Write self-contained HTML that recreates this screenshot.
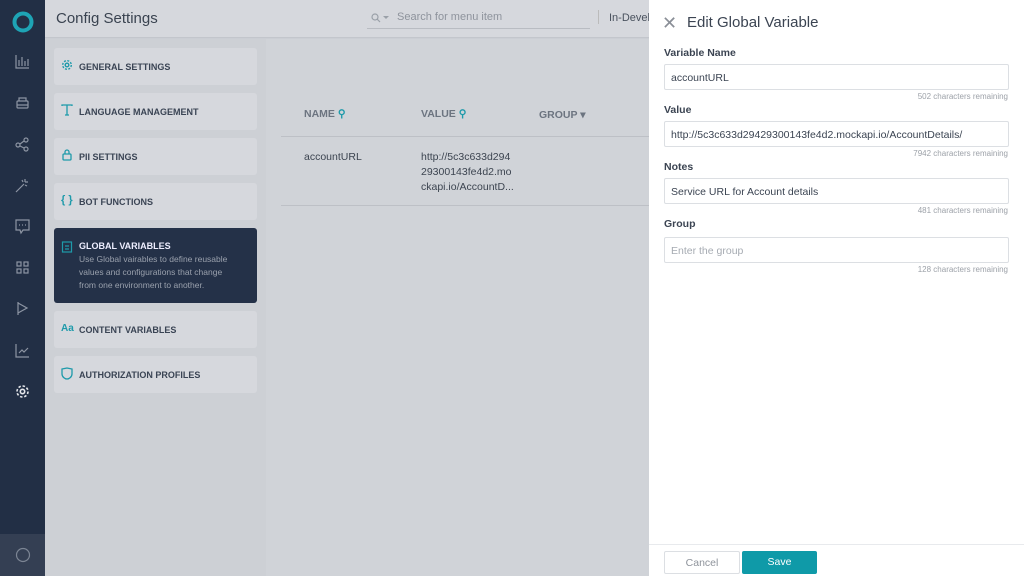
<!DOCTYPE html>
<html><head><meta charset="utf-8"><style>
*{box-sizing:border-box;margin:0;padding:0}
body{width:1024px;height:576px;overflow:hidden;position:relative;font-family:"Liberation Sans",sans-serif;background:#cbced4}
.side{position:absolute;left:0;top:0;width:45px;height:576px;background:#222f45}
.side .bot{position:absolute;left:0;bottom:0;width:45px;height:42px;background:#343f53}
.ic{position:absolute;left:14px;width:17px;height:17px}
.hdr{position:absolute;left:45px;top:0;width:604px;height:38px;background:#d6d8dd;border-bottom:1px solid #c3c6cc;overflow:hidden}
.hdr .t{position:absolute;left:11px;top:10px;font-size:15px;color:#3a4350}
.search{position:absolute;left:322px;top:8px;width:223px;height:21px;border-bottom:1px solid #b9bcc2;font-size:11px;color:#8e939c;padding:3px 0 0 30px}
.mid{position:absolute;left:45px;top:39px;width:221px;height:537px;background:#cdd0d5}
.card{position:absolute;left:9px;width:203px;height:37px;background:#d6d8dd;border-radius:3px;font-size:9px;font-weight:bold;color:#3a4454;padding:14px 0 0 25px}
.card svg{position:absolute;left:7px;top:11px}
.card.act{background:#243148;color:#eef;height:75px;padding-top:13px}
.card.act p{font-weight:normal;color:#9aa1ad;font-size:8.5px;line-height:13px;margin-top:2px;width:160px}
.tbl{position:absolute;left:266px;top:39px;width:383px;height:537px;background:#d0d3d8}
.th{position:absolute;top:69px;font-size:10.5px;font-weight:bold;color:#6c7480}
.line{position:absolute;left:15px;width:368px;height:1px;background:#bdc0c6}
.td{position:absolute;font-size:10.5px;color:#3c4450;line-height:15px}
.panel{position:absolute;left:649px;top:0;width:375px;height:576px;background:#fff}
.panel .x{position:absolute;left:13px;top:13px;font-size:18px;color:#8a8f97}
.panel h1{position:absolute;left:38px;top:14px;font-size:15px;font-weight:normal;color:#3b4452}
.lbl{position:absolute;left:15px;font-size:10.5px;font-weight:bold;color:#3b4452}
.inp{position:absolute;left:15px;width:345px;height:26px;border:1px solid #dcdfe3;border-radius:2px;font-size:10.5px;color:#3b4452;padding:7px 0 0 6px}
.rem{position:absolute;right:16px;font-size:8px;color:#9ca1a8}
.foot{position:absolute;left:0;top:544px;width:375px;height:32px;border-top:1px solid #e8eaed}
.btn{position:absolute;top:6px;height:23px;font-size:10.5px;text-align:center;padding-top:5px;border-radius:2px}
</style></head><body>
<div class="side">
<svg style="position:absolute;left:12px;top:11px" width="22" height="22"><circle cx="11" cy="11" r="8.5" fill="none" stroke="#1ea4b5" stroke-width="4"/></svg>
<svg class="ic" style="top:53px" viewBox="0 0 17 17" fill="none" stroke="#8d95a3" stroke-width="1.2"><path d="M2 2v13h13M5 13V7M8 13V4M11 13V8M14 13V6"/></svg>
<svg class="ic" style="top:94px" viewBox="0 0 17 17" fill="none" stroke="#8d95a3" stroke-width="1.2"><rect x="3" y="7" width="11" height="7" rx="1"/><path d="M5 7V4h7v3M3 11h11"/></svg>
<svg class="ic" style="top:136px" viewBox="0 0 17 17" fill="none" stroke="#8d95a3" stroke-width="1.2"><circle cx="4" cy="9" r="2"/><circle cx="12" cy="4" r="2"/><circle cx="12" cy="13" r="2"/><path d="M6 8l4-3M6 10l4 2"/></svg>
<svg class="ic" style="top:177px" viewBox="0 0 17 17" fill="none" stroke="#8d95a3" stroke-width="1.2"><path d="M2 15l8-8M11 2v3M14 5h-3M13 9l-2-1M8 3l1 2"/></svg>
<svg class="ic" style="top:218px" viewBox="0 0 17 17" fill="none" stroke="#8d95a3" stroke-width="1.2"><path d="M2 2h13v10H9l-2 3-1-3H2z"/><path d="M5 7h1M8 7h1M11 7h1"/></svg>
<svg class="ic" style="top:259px" viewBox="0 0 17 17" fill="none" stroke="#8d95a3" stroke-width="1.2"><rect x="3" y="3" width="4" height="4"/><rect x="10" y="3" width="4" height="4"/><rect x="3" y="10" width="4" height="4"/><rect x="10" y="10" width="4" height="4"/></svg>
<svg class="ic" style="top:300px" viewBox="0 0 17 17" fill="none" stroke="#8d95a3" stroke-width="1.2"><path d="M4 2v13M4 3l9 5-9 5"/></svg>
<svg class="ic" style="top:342px" viewBox="0 0 17 17" fill="none" stroke="#8d95a3" stroke-width="1.2"><path d="M2 2v13h13M5 11l3-3 2 2 4-4"/></svg>
<svg class="ic" style="top:383px" viewBox="0 0 17 17" fill="none" stroke="#e6e8ec" stroke-width="1.6"><circle cx="8.5" cy="8.5" r="2.2"/><circle cx="8.5" cy="8.5" r="5.5" stroke-dasharray="2.5 1.8"/></svg>
<div class="bot"><svg style="position:absolute;left:15px;top:13px" width="16" height="16"><circle cx="8" cy="8" r="6.5" fill="none" stroke="#7c8594" stroke-width="1.2"/></svg></div>
</div>
<div class="hdr"><div class="t">Config Settings</div>
<div class="search"><svg style="position:absolute;left:4px;top:5px" width="20" height="10" viewBox="0 0 20 10" fill="none" stroke="#9aa0a8" stroke-width="1.2"><circle cx="4" cy="4" r="3"/><path d="M6.2 6.2L9 9"/><path d="M12 3h6l-3 3z" fill="#9aa0a8" stroke="none"/></svg>Search for menu item</div>
<div style="position:absolute;left:553px;top:10px;width:1px;height:14px;background:#bbb"></div>
<div style="position:absolute;left:564px;top:12px;font-size:11px;color:#4a525e;white-space:nowrap">In-Devel</div>
</div>
<div class="mid">
<div class="card" style="top:9px"><svg width="12" height="12" viewBox="0 0 12 12" fill="none" stroke="#1e9aaa" stroke-width="1.4"><circle cx="6" cy="6" r="1.8"/><circle cx="6" cy="6" r="4.3" stroke-dasharray="2 1.4"/></svg>GENERAL SETTINGS</div>
<div class="card" style="top:54px"><svg width="12" height="12" viewBox="0 0 12 12" fill="none" stroke="#1e9aaa" stroke-width="1.3"><path d="M1 2V1h10v1M6 1v10M4 11h4"/></svg>LANGUAGE MANAGEMENT</div>
<div class="card" style="top:99px"><svg width="12" height="12" viewBox="0 0 12 12" fill="none" stroke="#1e9aaa" stroke-width="1.3"><rect x="2" y="5" width="8" height="6" rx="1"/><path d="M4 5V3a2 2 0 0 1 4 0v2"/></svg>PII SETTINGS</div>
<div class="card" style="top:144px"><span style="position:absolute;left:7px;top:11px;color:#1e9aaa;font-size:11px">{ }</span>BOT FUNCTIONS</div>
<div class="card act" style="top:189px"><svg width="12" height="12" viewBox="0 0 12 12" fill="none" stroke="#1e9aaa" stroke-width="1.2" style="top:13px"><rect x="1.5" y="1" width="9" height="10"/><path d="M4 5h4M4 8h4"/></svg>GLOBAL VARIABLES<p>Use Global vairables to define reusable values and configurations that change from one environment to another.</p></div>
<div class="card" style="top:272px"><span style="position:absolute;left:7px;top:12px;color:#1e9aaa;font-size:10px">Aa</span>CONTENT VARIABLES</div>
<div class="card" style="top:317px"><svg width="12" height="13" viewBox="0 0 12 13" fill="none" stroke="#1e9aaa" stroke-width="1.3"><path d="M1 2l5-1 5 1v5c0 3-3 5-5 5S1 10 1 7z"/></svg>AUTHORIZATION PROFILES</div>
</div>
<div class="tbl">
<div class="th" style="left:38px">NAME <span style="color:#1e9aaa">&#9906;</span></div>
<div class="th" style="left:155px">VALUE <span style="color:#1e9aaa">&#9906;</span></div>
<div class="th" style="left:273px;top:70px">GROUP &#9662;</div>
<div class="line" style="top:97px"></div>
<div class="td" style="left:38px;top:111px">accountURL</div>
<div class="td" style="left:155px;top:111px">http://5c3c633d294<br>29300143fe4d2.mo<br>ckapi.io/AccountD...</div>
<div class="line" style="top:166px"></div>
</div>
<div class="panel">
<div class="x">&#10005;</div><h1>Edit Global Variable</h1>
<div class="lbl" style="top:47px">Variable Name</div>
<div class="inp" style="top:64px">accountURL</div>
<div class="rem" style="top:92px">502 characters remaining</div>
<div class="lbl" style="top:104px">Value</div>
<div class="inp" style="top:121px">http://5c3c633d29429300143fe4d2.mockapi.io/AccountDetails/</div>
<div class="rem" style="top:149px">7942 characters remaining</div>
<div class="lbl" style="top:161px">Notes</div>
<div class="inp" style="top:178px">Service URL for Account details</div>
<div class="rem" style="top:206px">481 characters remaining</div>
<div class="lbl" style="top:218px">Group</div>
<div class="inp" style="top:237px;color:#a6abb2">Enter the group</div>
<div class="rem" style="top:265px">128 characters remaining</div>
<div class="foot">
<div class="btn" style="left:15px;width:76px;border:1px solid #dcdfe3;color:#8e939b">Cancel</div>
<div class="btn" style="left:93px;width:75px;background:#0f9aa8;color:#fff">Save</div>
</div>
</div>
</body></html>
